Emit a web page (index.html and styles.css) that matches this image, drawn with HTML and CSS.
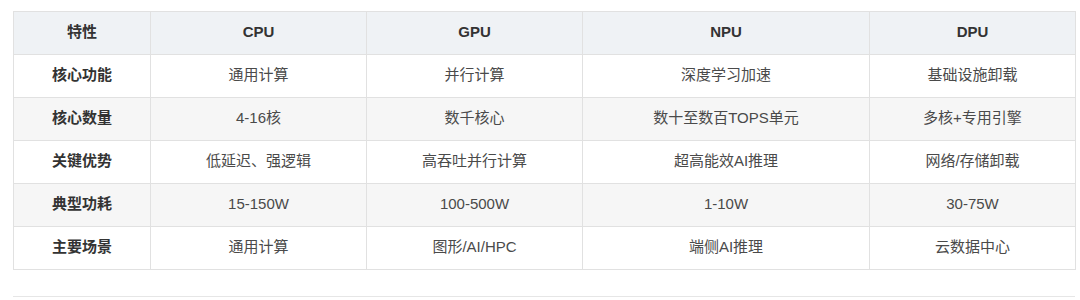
FILE: index.html
```html
<!DOCTYPE html>
<html lang="zh">
<head>
    <meta charset="UTF-8">
    <title>处理器对比</title>
    <link rel="stylesheet" href="styles.css">
</head>
<body>
<div class="wrap">
    <table class="compare">
        <colgroup>
            <col class="c1">
            <col class="c2">
            <col class="c3">
            <col class="c4">
            <col class="c5">
        </colgroup>
        <thead>
        <tr>
            <th>特性</th>
            <th>CPU</th>
            <th>GPU</th>
            <th>NPU</th>
            <th>DPU</th>
        </tr>
        </thead>
        <tbody>
        <tr>
            <td class="name">核心功能</td>
            <td>通用计算</td>
            <td>并行计算</td>
            <td>深度学习加速</td>
            <td>基础设施卸载</td>
        </tr>
        <tr>
            <td class="name">核心数量</td>
            <td>4-16核</td>
            <td>数千核心</td>
            <td>数十至数百TOPS单元</td>
            <td>多核+专用引擎</td>
        </tr>
        <tr>
            <td class="name">关键优势</td>
            <td>低延迟、强逻辑</td>
            <td>高吞吐并行计算</td>
            <td>超高能效AI推理</td>
            <td>网络/存储卸载</td>
        </tr>
        <tr>
            <td class="name">典型功耗</td>
            <td>15-150W</td>
            <td>100-500W</td>
            <td>1-10W</td>
            <td>30-75W</td>
        </tr>
        <tr>
            <td class="name">主要场景</td>
            <td>通用计算</td>
            <td>图形/AI/HPC</td>
            <td>端侧AI推理</td>
            <td>云数据中心</td>
        </tr>
        </tbody>
    </table>
    <div class="line"></div>
</div>
</body>
</html>
```

FILE: styles.css
```css
*{
    margin: 0;
    padding: 0;
}
body{
    background: #fff;
    font-family: "Liberation Sans", "Noto Sans CJK SC", sans-serif;
    color: #4a4a4a;
}
.wrap{
    padding: 11px 5px 0 13px;
}
.compare{
    width: 1062px;
    border-collapse: collapse;
    table-layout: fixed;
    font-size: 15px;
    line-height: 18px;
}
.c1{ width: 137px; }
.c2{ width: 216px; }
.c3{ width: 216px; }
.c4{ width: 287px; }
.c5{ width: 206px; }
.compare th,
.compare td{
    height: 40px;
    padding-bottom: 2px;
    border: 1px solid #e1e1e1;
    text-align: center;
    vertical-align: middle;
}
.compare th{
    background: #eff2f5;
    color: #333;
    font-weight: bold;
}
.compare tbody tr:nth-child(even) td{
    background: #f6f6f6;
}
.compare td.name{
    font-weight: bold;
    color: #333;
}
.line{
    width: 1062px;
    height: 1px;
    margin-top: 26px;
    background: #e6e6e6;
}
```
